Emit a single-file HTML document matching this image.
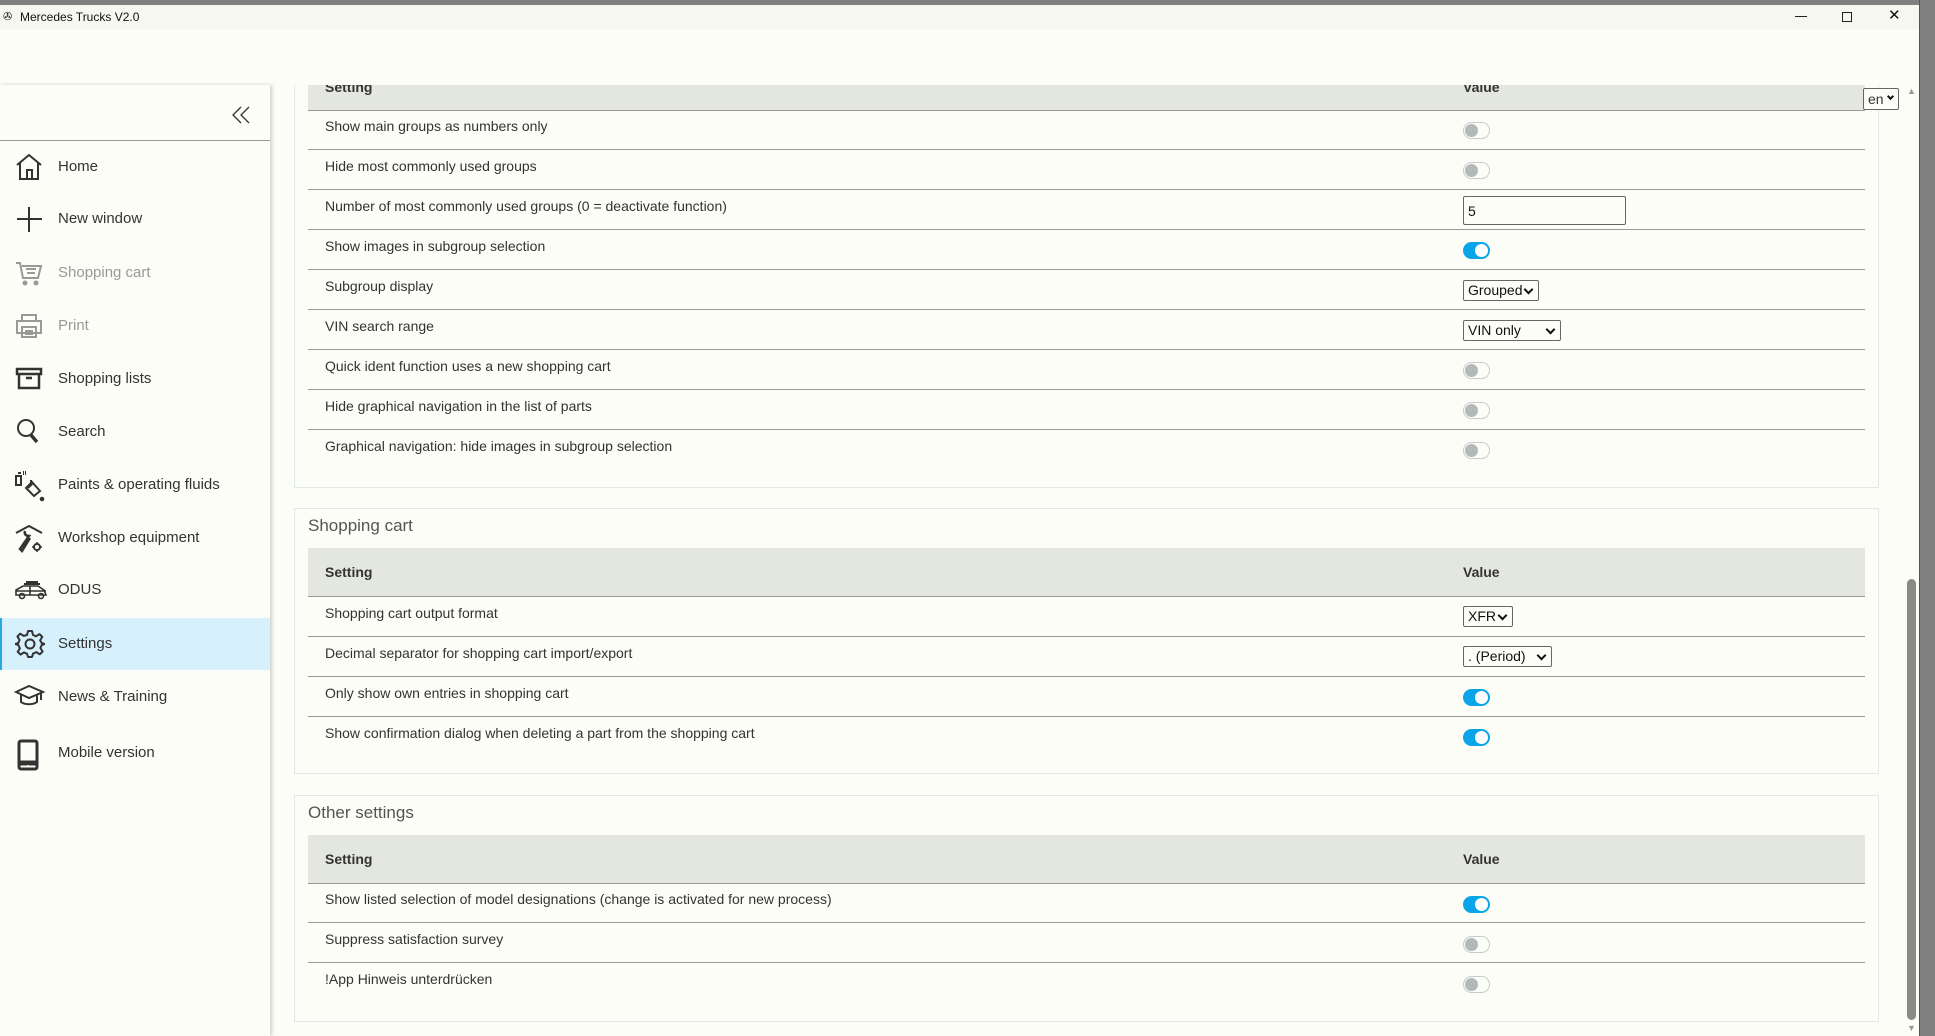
<!DOCTYPE html>
<html><head><meta charset="utf-8"><style>
*{box-sizing:border-box;margin:0;padding:0}
body{width:1935px;height:1036px;overflow:hidden;background:#fdfdf7;font-family:"Liberation Sans",sans-serif;color:#333;position:relative}
.abs{position:absolute}
.topband{left:0;top:0;width:1935px;height:5px;background:#808080}
.rband{left:1919px;top:0;width:16px;height:1036px;background:#808080;border-left:1px solid #555}
.title{left:0;top:5px;width:1919px;height:24px;background:#f6f8f0;font-size:12px;line-height:24px;padding-left:20px;color:#111}
.side{left:0;top:85px;width:270px;height:951px;background:#fdfdf7;box-shadow:2px 0 4px rgba(0,0,0,.18)}
.item{position:absolute;left:0;width:270px;height:52px;font-size:15px;line-height:52px;padding-left:58px;color:#333}
.item svg{position:absolute;left:14px;top:11px}
.sel{background:#d6f0fc;border-left:2px solid #2aa9e0;padding-left:56px}
.box{left:294px;width:1585px;border:1px solid #dfe8e8;background:#fdfdf7}
.hdr{position:absolute;left:308px;width:1557px;background:#e4e7e0;border-bottom:1px solid #999;font-weight:bold;font-size:14px}
.row{position:absolute;left:308px;width:1557px;height:40px;border-bottom:1px solid #999;font-size:14px;padding:8px 0 0 17px}
.tog{position:absolute;left:1463px;width:27px;height:17px;border-radius:9px}
.off{border:1px solid #c6cccc;background:#fdfdf7}
.off:after{content:"";position:absolute;left:1px;top:1px;width:13px;height:13px;border-radius:7px;background:#b3b8bb}
.on{background:#0aa5e8}
.on:after{content:"";position:absolute;right:2px;top:2px;width:13px;height:13px;border-radius:7px;background:#fff}
.sel2{position:absolute;left:1463px;height:21px;border:1px solid #666;border-radius:2px;font-size:14px;line-height:19px;padding-left:4px;background:#fdfdf7;color:#111}
.sel2:after{content:"";position:absolute;right:6px;top:5px;width:5px;height:5px;border-right:2px solid #111;border-bottom:2px solid #111;transform:rotate(45deg)}
.sec{position:absolute;left:308px;font-size:17px;color:#555}
</style></head><body>

<!-- content -->
<div class="abs box" style="top:70px;height:418px;border-top:none"></div>
<div class="hdr" style="top:70px;height:41px"><span style="position:absolute;left:17px;top:9px">Setting</span><span style="position:absolute;left:1155px;top:9px">Value</span></div>
<div class="row" style="top:110px">Show main groups as numbers only</div>
<div class="row" style="top:150px">Hide most commonly used groups</div>
<div class="row" style="top:190px">Number of most commonly used groups (0 = deactivate function)</div>
<div class="row" style="top:230px">Show images in subgroup selection</div>
<div class="row" style="top:270px">Subgroup display</div>
<div class="row" style="top:310px">VIN search range</div>
<div class="row" style="top:350px">Quick ident function uses a new shopping cart</div>
<div class="row" style="top:390px">Hide graphical navigation in the list of parts</div>
<div class="row" style="top:430px;border-bottom:none">Graphical navigation: hide images in subgroup selection</div>
<div class="tog off" style="top:122px"></div>
<div class="tog off" style="top:162px"></div>
<div class="abs" style="left:1463px;top:196px;width:163px;height:29px;border:1px solid #666;border-radius:2px;font-size:14px;padding:6px 0 0 4px;color:#111">5</div>
<div class="tog on" style="top:242px"></div>
<div class="sel2" style="top:280px;width:76px">Grouped</div>
<div class="sel2" style="top:320px;width:98px">VIN only</div>
<div class="tog off" style="top:362px"></div>
<div class="tog off" style="top:402px"></div>
<div class="tog off" style="top:442px"></div>

<div class="abs box" style="top:508px;height:266px"></div>
<div class="sec" style="top:516px">Shopping cart</div>
<div class="hdr" style="top:548px;height:49px"><span style="position:absolute;left:17px;top:16px">Setting</span><span style="position:absolute;left:1155px;top:16px">Value</span></div>
<div class="row" style="top:597px">Shopping cart output format</div>
<div class="row" style="top:637px">Decimal separator for shopping cart import/export</div>
<div class="row" style="top:677px">Only show own entries in shopping cart</div>
<div class="row" style="top:717px;border-bottom:none">Show confirmation dialog when deleting a part from the shopping cart</div>
<div class="sel2" style="top:606px;width:50px">XFR</div>
<div class="sel2" style="top:646px;width:89px">. (Period)</div>
<div class="tog on" style="top:689px"></div>
<div class="tog on" style="top:729px"></div>

<div class="abs box" style="top:795px;height:227px"></div>
<div class="sec" style="top:803px">Other settings</div>
<div class="hdr" style="top:835px;height:49px"><span style="position:absolute;left:17px;top:16px">Setting</span><span style="position:absolute;left:1155px;top:16px">Value</span></div>
<div class="row" style="top:883px">Show listed selection of model designations (change is activated for new process)</div>
<div class="row" style="top:923px">Suppress satisfaction survey</div>
<div class="row" style="top:963px;border-bottom:none">!App Hinweis unterdrücken</div>
<div class="tog on" style="top:896px"></div>
<div class="tog off" style="top:936px"></div>
<div class="tog off" style="top:976px"></div>

<!-- top cover clipping content -->
<div class="abs" style="left:0;top:29px;width:1919px;height:56px;background:#fdfdf7"></div>
<div class="abs topband"></div>
<div class="abs title"><span style="position:absolute;left:3px;top:0;font-size:11px">✇</span>Mercedes Trucks V2.0
<span style="position:absolute;left:1795px;top:11px;width:12px;height:1px;background:#222"></span>
<span style="position:absolute;left:1842px;top:7px;width:10px;height:10px;border:1px solid #222"></span>
<span style="position:absolute;left:1888px;top:-1px;font-size:15px">✕</span></div>
<div class="abs rband"></div>

<div class="abs" style="left:1863px;top:88px;width:36px;height:22px;border:1px solid #666;border-radius:2px;font-size:14px;line-height:20px;padding-left:4px;background:#fdfdf7">en</div>
<div class="abs" style="left:1888px;top:94px;width:5px;height:5px;border-right:2px solid #111;border-bottom:2px solid #111;transform:rotate(45deg)"></div>
<div class="abs" style="left:1907px;top:579px;width:9px;height:441px;border-radius:5px;background:#8a8c84"></div>
<div class="abs" style="left:1907px;top:86px;font-size:9px;color:#999">▲</div>
<div class="abs" style="left:1907px;top:1023px;font-size:9px;color:#999">▼</div>

<!-- sidebar -->
<div class="abs side">
<div class="abs" style="left:0;top:55px;width:270px;height:1px;background:#999"></div>
<svg class="abs" style="left:232px;top:20px" width="20" height="20" viewBox="0 0 20 20" fill="none" stroke="#333" stroke-width="1.3"><path d="M9 2 1 10l8 8M17 2 9 10l8 8"/></svg>
<div class="item" style="top:56px"><svg width="30" height="30" viewBox="0 0 30 30" fill="none" stroke="#333" stroke-width="2"><path d="M3 13 15 3l12 10M6 11v16h18V11M13 27v-9h5v9"/></svg>Home</div>
<div class="item" style="top:108px"><svg width="30" height="30" viewBox="0 0 30 30" stroke="#333" stroke-width="2"><path d="M15 3v25M3 15h25"/></svg>New window</div>
<div class="item" style="top:162px;color:#999"><svg width="30" height="30" viewBox="0 0 30 30" fill="none" stroke="#999" stroke-width="2"><path d="M2 5h4l3 15h15l3-12H8M12 11h10M13 15h8"/><circle cx="11" cy="25" r="1.5" fill="#999"/><circle cx="22" cy="25" r="1.5" fill="#999"/></svg>Shopping cart</div>
<div class="item" style="top:215px;color:#999"><svg width="30" height="30" viewBox="0 0 30 30" fill="none" stroke="#999" stroke-width="2"><path d="M8 10V4h14v6M3 10h24v12H3zM8 16h14v10H8zM11 20h8M11 23h8"/></svg>Print</div>
<div class="item" style="top:268px"><svg width="30" height="30" viewBox="0 0 30 30" fill="none" stroke="#333" stroke-width="2.5"><path d="M3 5h24v5H3zM5 10v14h20V10M12 14h6"/></svg>Shopping lists</div>
<div class="item" style="top:321px"><svg width="30" height="30" viewBox="0 0 30 30" fill="none" stroke="#333" stroke-width="2"><circle cx="12" cy="11" r="8"/><path d="M17 18l6 7" stroke-width="3.5"/></svg>Search</div>
<div class="item" style="top:374px"><svg width="32" height="32" viewBox="0 0 32 32" fill="none" stroke="#333" stroke-width="2"><path d="M2 6h5v9H2zM4 3h3M9 2h1M11 2h1M9 4h1M11 4h1M18 12l8 9-6 5-8-8zM17 10v5M14 18l5-5"/><circle cx="28" cy="29" r="1.3" fill="#333"/></svg>Paints &amp; operating fluids</div>
<div class="item" style="top:427px"><svg width="32" height="32" viewBox="0 0 32 32" fill="none" stroke="#333" stroke-width="2"><path d="M2 10 15 3l13 7"/><path d="M11 8c-1 3 1 5 4 5l-9 13 2 2 8-13" stroke-width="2.5"/><circle cx="23" cy="24" r="3"/><path d="M23 19v2M23 27v2M18 24h2M26 24h2" stroke-width="1.5"/></svg>Workshop equipment</div>
<div class="item" style="top:479px"><svg width="34" height="30" viewBox="0 0 34 30" fill="none" stroke="#333" stroke-width="1.6"><path d="M12 7h12M10 9h16" stroke-width="2"/><path d="M2 20v-5l7-4h15l6 4 2 5zM2 16h30M16 11v9"/><circle cx="8" cy="21" r="2.5"/><circle cx="27" cy="21" r="2.5"/></svg>ODUS</div>
<div class="item sel" style="top:533px"><svg style="left:13px" width="30" height="30" viewBox="0 0 30 30" fill="none" stroke="#333" stroke-width="2" stroke-linejoin="round"><circle cx="15" cy="15" r="4.5"/><path d="M13 2h4l1 4 3 1.3 3.5-2.2 2.8 2.8-2.2 3.5L26.7 14l3.3 1v0l-3.3 1-1.3 3 2.2 3.5-2.8 2.8-3.5-2.2L18 24.7 17 28h-4l-1-3.3-3-1.3-3.5 2.2-2.8-2.8 2.2-3.5L3.3 16 0 15l3.3-1 1.3-3-2.2-3.5 2.8-2.8 3.5 2.2L12 6z"/></svg>Settings</div>
<div class="item" style="top:586px"><svg width="32" height="30" viewBox="0 0 32 30" fill="none" stroke="#333" stroke-width="2"><path d="M2 10 15 4l14 6-14 6zM7 13v7c4 3 12 3 16 0v-7M27 11v7"/></svg>News &amp; Training</div>
<div class="item" style="top:642px"><svg width="30" height="34" viewBox="0 0 30 34" fill="none" stroke="#333" stroke-width="3"><rect x="5" y="3" width="18" height="28" rx="2"/><path d="M5 25h18" stroke-width="5"/><circle cx="14" cy="28" r="1" fill="#fff" stroke="none"/></svg>Mobile version</div>
</div>
</body></html>
